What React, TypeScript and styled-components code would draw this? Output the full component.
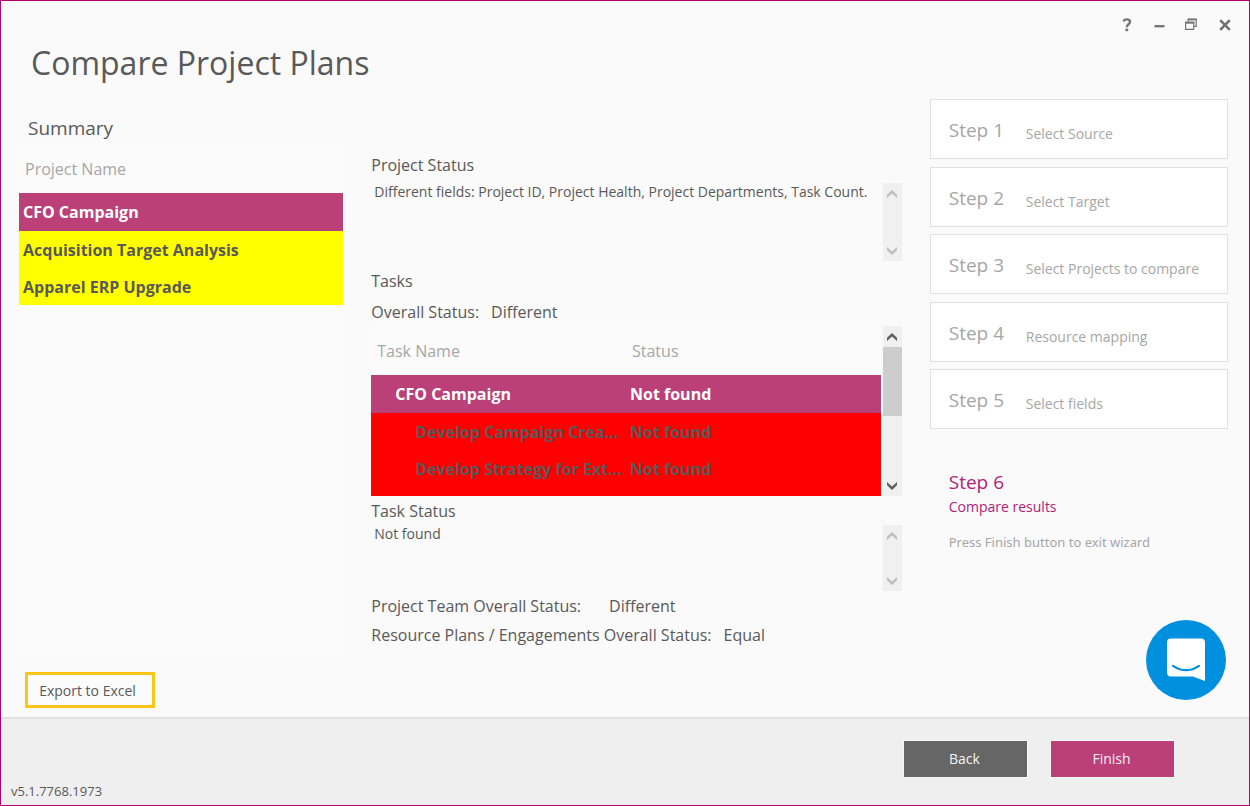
import React from 'react';
import styled, { createGlobalStyle, css } from 'styled-components';

const color = {
  page: '#fafafa',
  panel: '#fbfbfb',
  text: '#595959',
  muted: '#a6a6a6',
  accent: '#ba4077',
  current: '#b4207c',
  frame: '#b4006e',
  different: '#ffff00',
  missing: '#ff0000',
};

const GlobalStyle = createGlobalStyle`
  *, *::before, *::after { box-sizing: border-box; }
  body {
    margin: 0;
    background: ${color.page};
    color: ${color.text};
    font-family: "Open Sans", "Noto Sans", sans-serif;
    font-size: 16px;
    line-height: 22px;
  }
  button { font: inherit; color: inherit; cursor: pointer; }
  h1, h2, h3, p, ol, dl, dd, dt { margin: 0; padding: 0; font-weight: 400; }
`;

const labelFont = css`
  font-size: 16px;
  line-height: 22px;
`;

const Window = styled.div`
  position: relative;
  display: flex;
  flex-direction: column;
  min-height: 100vh;
  border: 1px solid ${color.frame};
`;

const Header = styled.header`
  display: flex;
  justify-content: space-between;
  align-items: flex-start;
  height: 98px;
  padding: 12px 10px 0 30px;
`;

const Title = styled.h1`
  padding-top: 28px;
  font-size: 32px;
  line-height: 44px;
`;

const WindowControls = styled.div`
  display: flex;
  gap: 8px;
`;

const ControlButton = styled.button<{ $wide?: boolean }>`
  display: grid;
  place-items: center;
  width: ${(p) => (p.$wide ? 28 : 24)}px;
  height: 24px;
  padding: 0;
  border: 0;
  background: none;
`;

const Content = styled.main`
  flex: 1;
  display: grid;
  grid-template-columns: minmax(0, 324fr) minmax(0, 530fr) minmax(0, 298fr);
  column-gap: 28px;
  padding: 0 21px 0 18px;
`;

const SummaryColumn = styled.section`
  display: flex;
  flex-direction: column;
  align-items: stretch;
  padding-bottom: 9px;
`;

const SummaryHeading = styled.h2`
  padding: 15px 0 3px 9px;
  font-size: 19px;
  line-height: 28px;
`;

const ListPanel = styled.div`
  flex: 1;
  background: ${color.panel};
`;

const GridTable = styled.table`
  width: 100%;
  table-layout: fixed;
  border-collapse: collapse;
  text-align: left;
  ${labelFont}
`;

const HeadCell = styled.th<{ $width?: string; $height?: number }>`
  width: ${(p) => p.$width ?? 'auto'};
  height: ${(p) => p.$height ?? 48}px;
  padding: 0 6px;
  background: ${color.panel};
  color: ${color.muted};
  font-weight: 400;
`;

type RowState = 'selected' | 'different' | 'missing';

const rowStyles = {
  selected: css`
    height: 38px;
    background: ${color.accent};
    color: #fff;
  `,
  different: css`
    height: 37px;
    background: ${color.different};
  `,
  missing: css`
    height: 37px;
    background: ${color.missing};
  `,
};

const Row = styled.tr<{ $state: RowState }>`
  font-weight: 700;
  ${(p) => rowStyles[p.$state]}
`;

const Cell = styled.td<{ $indent?: number }>`
  padding: 0 4px 0 ${(p) => p.$indent ?? 4}px;
  white-space: nowrap;
`;

const ExportButton = styled.button`
  align-self: flex-start;
  width: 130px;
  height: 36px;
  margin: 16px 0 0 6px;
  padding: 1px 5px 0 0;
  border: 3px solid #ffc516;
  background: ${color.panel};
  font-size: 14px;
`;

const DetailColumn = styled.section`
  display: flex;
  flex-direction: column;
  padding-top: 55px;
`;

const Label = styled.h3`
  ${labelFont}
`;

const ScrollArea = styled.div<{ $height: number; $top?: number; $bottom?: number }>`
  display: flex;
  gap: 2px;
  height: ${(p) => p.$height}px;
  margin: ${(p) => p.$top ?? 3}px 0 ${(p) => p.$bottom ?? 4}px;
`;

const ScrollBody = styled.div<{ $fill?: string }>`
  flex: 1;
  min-width: 0;
  overflow: hidden;
  background: ${(p) => p.$fill ?? 'transparent'};
`;

const Message = styled.p`
  padding-left: 3px;
  font-size: 14px;
  line-height: 18px;
`;

const Track = styled.div`
  display: flex;
  flex-direction: column;
  width: 19px;
  background: #f0f0f0;
`;

const ArrowButton = styled.button`
  display: grid;
  place-items: center;
  height: 21px;
  padding: 0;
  border: 0;
  background: none;
  color: #606060;
  &:disabled { color: #bfbfbf; cursor: default; }
`;

const ThumbLane = styled.div`
  flex: 1;
`;

const Thumb = styled.div`
  height: 69px;
  background: #cdcdcd;
`;

const StatusLine = styled.dl<{ $gap: number; $top: number }>`
  display: flex;
  gap: ${(p) => p.$gap}px;
  margin-top: ${(p) => p.$top}px;
  ${labelFont}
`;

const StepsColumn = styled.aside`
  color: ${color.muted};
`;

const StepList = styled.ol`
  display: flex;
  flex-direction: column;
  justify-content: space-between;
  height: 330px;
  list-style: none;
`;

const StepCard = styled.li`
  display: flex;
  align-items: flex-start;
  height: 60px;
  padding: 16px 18px 0;
  border: 1px solid #e1e1e1;
  background: #fff;
`;

const StepNumber = styled.span`
  width: 77px;
  font-size: 19px;
  line-height: 28px;
`;

const StepName = styled.span`
  padding-top: 8px;
  font-size: 14px;
  line-height: 20px;
`;

const CurrentStep = styled.div`
  padding: 39px 0 0 19px;
  color: ${color.current};
`;

const CurrentNumber = styled.p`
  font-size: 19px;
  line-height: 28px;
`;

const CurrentName = styled.p`
  font-size: 14px;
  line-height: 22px;
`;

const CurrentHint = styled.p`
  padding-top: 14px;
  color: ${color.muted};
  font-family: "Noto Sans", "Open Sans", sans-serif;
  font-size: 13px;
  line-height: 20px;
`;

const Footer = styled.footer`
  display: flex;
  justify-content: space-between;
  align-items: flex-start;
  height: 88px;
  padding: 22px 75px 0 10px;
  border-top: 2px solid #e2e2e2;
  background: #efefef;
`;

const Version = styled.span`
  align-self: flex-end;
  padding-bottom: 4px;
  font-size: 13px;
  line-height: 20px;
`;

const Actions = styled.div`
  display: flex;
  gap: 24px;
`;

const ActionButton = styled.button<{ $primary?: boolean }>`
  width: 123px;
  height: 36px;
  padding: 0 2px 0 0;
  border: 0;
  outline: 1px solid #f8f8f8;
  background: ${(p) => (p.$primary ? color.accent : '#666')};
  color: #f2f2f2;
  font-size: 14px;
`;

const ChatButton = styled.button`
  position: absolute;
  right: 23px;
  bottom: 105px;
  width: 80px;
  height: 80px;
  padding: 0;
  border: 0;
  border-radius: 50%;
  background: #0090e0;
`;

function Arrow({ down }: { down?: boolean }) {
  return (
    <svg width="10" height="8" viewBox="0 0 10 8" fill="currentColor" aria-hidden="true">
      <path d={down ? 'M0 0L5 4.6L10 0V3.2L5 8L0 3.2Z' : 'M0 8L5 3.4L10 8V4.8L5 0L0 4.8Z'} />
    </svg>
  );
}

function ScrollBar({ thumb, name }: { thumb?: boolean; name: string }) {
  return (
    <Track>
      <ArrowButton disabled={!thumb} aria-label={`Scroll ${name} up`}>
        <Arrow />
      </ArrowButton>
      <ThumbLane>{thumb && <Thumb />}</ThumbLane>
      <ArrowButton disabled={!thumb} aria-label={`Scroll ${name} down`}>
        <Arrow down />
      </ArrowButton>
    </Track>
  );
}

const projects: { name: string; state: RowState }[] = [
  { name: 'CFO Campaign', state: 'selected' },
  { name: 'Acquisition Target Analysis', state: 'different' },
  { name: 'Apparel ERP Upgrade', state: 'different' },
];

const tasks: { name: string; state: RowState; indent: number }[] = [
  { name: 'CFO Campaign', state: 'selected', indent: 24 },
  { name: 'Develop Campaign Crea...', state: 'missing', indent: 44 },
  { name: 'Develop Strategy for Ext...', state: 'missing', indent: 44 },
];

const steps = ['Select Source', 'Select Target', 'Select Projects to compare', 'Resource mapping', 'Select fields'];

export default function App() {
  return (
    <>
      <GlobalStyle />
      <Window>
        <Header>
          <Title>Compare Project Plans</Title>
          <WindowControls>
            <ControlButton aria-label="Help">
              <svg width="10" height="14" viewBox="0 0 10 14" fill="none" stroke="#757575" strokeWidth="2.4">
                <path d="M1.2 3.2C2.2 1.8 3.6 1.4 5 1.4C7 1.4 8 2.3 8 3.8C8 6.2 4.8 6.4 4.8 9.2" />
                <path d="M4.8 10.6V13.2" strokeWidth="2.8" />
              </svg>
            </ControlButton>
            <ControlButton aria-label="Minimize">
              <svg width="11" height="12" viewBox="0 0 11 12">
                <path d="M.5 7.2H10.5" stroke="#757575" strokeWidth="2.4" />
              </svg>
            </ControlButton>
            <ControlButton aria-label="Restore">
              <svg width="12" height="14" viewBox="0 0 12 14" fill="none" stroke="#757575">
                <path d="M.6 4V11.4H8.7V4" strokeWidth="1.2" />
                <path d="M0 4.6H9.3" strokeWidth="2.2" />
                <path d="M3.2 3.6V1.6M11.2 1V8.4H9" strokeWidth="1.2" />
                <path d="M2.6 1.4H11.8" strokeWidth="2" />
              </svg>
            </ControlButton>
            <ControlButton $wide aria-label="Close">
              <svg width="12" height="12" viewBox="0 0 12 12" stroke="#707070" strokeWidth="2.6">
                <path d="M1.2 1.2L10.8 10.8M10.8 1.2L1.2 10.8" />
              </svg>
            </ControlButton>
          </WindowControls>
        </Header>

        <Content>
          <SummaryColumn>
            <SummaryHeading>Summary</SummaryHeading>
            <ListPanel>
              <GridTable>
                <thead>
                  <tr>
                    <HeadCell scope="col">Project Name</HeadCell>
                  </tr>
                </thead>
                <tbody>
                  {projects.map((p) => (
                    <Row key={p.name} $state={p.state}>
                      <Cell>{p.name}</Cell>
                    </Row>
                  ))}
                </tbody>
              </GridTable>
            </ListPanel>
            <ExportButton>Export to Excel</ExportButton>
          </SummaryColumn>

          <DetailColumn>
            <Label>Project Status</Label>
            <ScrollArea $height={78} $top={7} $bottom={9}>
              <ScrollBody>
                <Message>
                  Different fields: Project ID, Project Health, Project Departments, Task Count.
                </Message>
              </ScrollBody>
              <ScrollBar name="project status" />
            </ScrollArea>

            <Label>Tasks</Label>
            <StatusLine $gap={12} $top={9}>
              <dt>Overall Status:</dt>
              <dd>Different</dd>
            </StatusLine>
            <ScrollArea $height={170}>
              <ScrollBody $fill={color.missing}>
                <GridTable>
                  <thead>
                    <tr>
                      <HeadCell scope="col" $width="50%" $height={49}>Task Name</HeadCell>
                      <HeadCell scope="col" $height={49}>Status</HeadCell>
                    </tr>
                  </thead>
                  <tbody>
                    {tasks.map((t) => (
                      <Row key={t.name} $state={t.state}>
                        <Cell $indent={t.indent}>{t.name}</Cell>
                        <Cell>Not found</Cell>
                      </Row>
                    ))}
                  </tbody>
                </GridTable>
              </ScrollBody>
              <ScrollBar thumb name="tasks" />
            </ScrollArea>

            <Label>Task Status</Label>
            <ScrollArea $height={66}>
              <ScrollBody>
                <Message>Not found</Message>
              </ScrollBody>
              <ScrollBar name="task status" />
            </ScrollArea>

            <StatusLine $gap={28} $top={0}>
              <dt>Project Team Overall Status:</dt>
              <dd>Different</dd>
            </StatusLine>
            <StatusLine $gap={12} $top={7}>
              <dt>Resource Plans / Engagements Overall Status:</dt>
              <dd>Equal</dd>
            </StatusLine>
          </DetailColumn>

          <StepsColumn>
            <StepList>
              {steps.map((name, i) => (
                <StepCard key={name}>
                  <StepNumber>Step {i + 1}</StepNumber>
                  <StepName>{name}</StepName>
                </StepCard>
              ))}
            </StepList>
            <CurrentStep>
              <CurrentNumber>Step 6</CurrentNumber>
              <CurrentName>Compare results</CurrentName>
              <CurrentHint>Press Finish button to exit wizard</CurrentHint>
            </CurrentStep>
          </StepsColumn>
        </Content>

        <Footer>
          <Version>v5.1.7768.1973</Version>
          <Actions>
            <ActionButton>Back</ActionButton>
            <ActionButton $primary>Finish</ActionButton>
          </Actions>
        </Footer>

        <ChatButton aria-label="Open chat">
          <svg width="80" height="80" viewBox="0 0 80 80">
            <path d="M25 18.5H55Q59 18.5 59 22.5V61L47 56.5H25Q21 56.5 21 52.5V22.5Q21 18.5 25 18.5Z" fill="#fff" />
            <path d="M27 45.8Q40 54.6 53 45.8" fill="none" stroke="#0090e0" strokeWidth="2.2" strokeLinecap="round" />
          </svg>
        </ChatButton>
      </Window>
    </>
  );
}
